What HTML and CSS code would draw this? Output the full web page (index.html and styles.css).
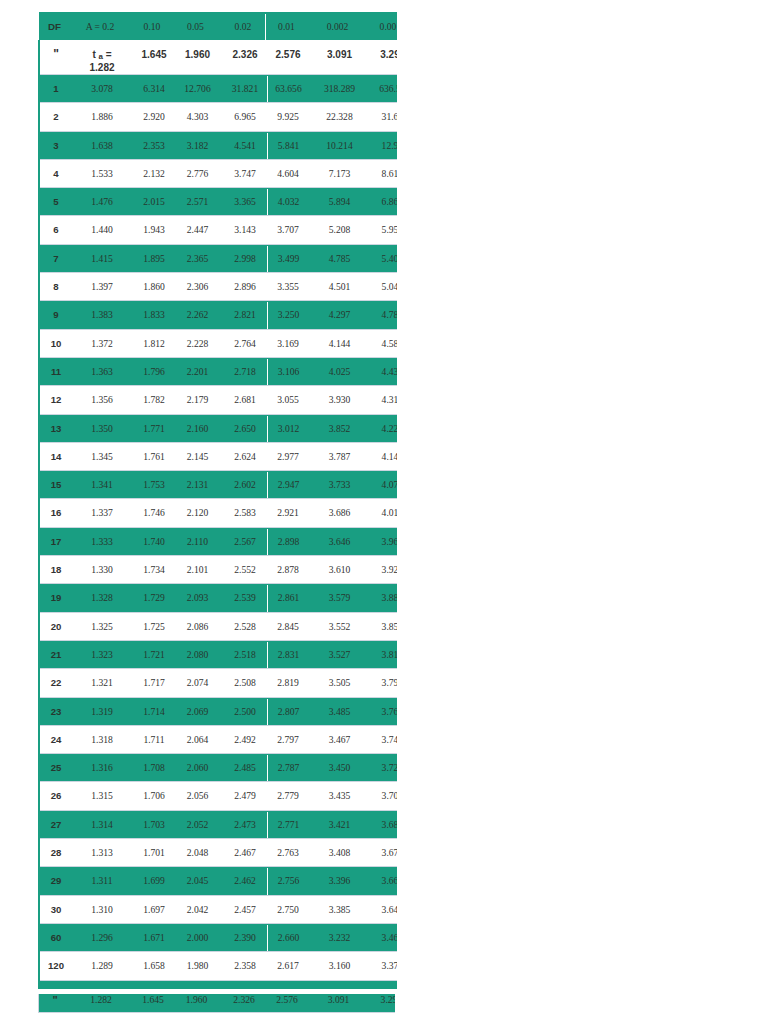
FILE: index.html
```html
<!DOCTYPE html>
<html lang="en">
<head>
<meta charset="utf-8">
<title>t-distribution table</title>
<link rel="stylesheet" href="styles.css">
</head>
<body>
<div class="page">
  <div class="sheet">
    <div class="head">
      <div class="c c1 b">DF</div>
      <div class="c c2">A = 0.2</div>
      <div class="c c3">0.10</div>
      <div class="c c4">0.05</div>
      <div class="c c5">0.02</div>
      <div class="c c6">0.01</div>
      <div class="c c7">0.002</div>
      <div class="c c8">0.00</div>
    </div>
    <div class="body">
      <div class="row inf">
        <div class="c c1 b">"</div>
        <div class="c c2 b">t <span class="sub">a</span> =<br>1.282</div>
        <div class="c c3 b">1.645</div>
        <div class="c c4 b">1.960</div>
        <div class="c c5 b">2.326</div>
        <div class="c c6 b">2.576</div>
        <div class="c c7 b">3.091</div>
        <div class="c c8 b">3.29</div>
      </div>
      <div class="row g"><div class="c c1 b">1</div><div class="c c2">3.078</div><div class="c c3">6.314</div><div class="c c4">12.706</div><div class="c c5">31.821</div><div class="c c6">63.656</div><div class="c c7">318.289</div><div class="c c8">636.5</div></div>
      <div class="row"><div class="c c1 b">2</div><div class="c c2">1.886</div><div class="c c3">2.920</div><div class="c c4">4.303</div><div class="c c5">6.965</div><div class="c c6">9.925</div><div class="c c7">22.328</div><div class="c c8">31.6</div></div>
      <div class="row g"><div class="c c1 b">3</div><div class="c c2">1.638</div><div class="c c3">2.353</div><div class="c c4">3.182</div><div class="c c5">4.541</div><div class="c c6">5.841</div><div class="c c7">10.214</div><div class="c c8">12.9</div></div>
      <div class="row"><div class="c c1 b">4</div><div class="c c2">1.533</div><div class="c c3">2.132</div><div class="c c4">2.776</div><div class="c c5">3.747</div><div class="c c6">4.604</div><div class="c c7">7.173</div><div class="c c8">8.61</div></div>
      <div class="row g"><div class="c c1 b">5</div><div class="c c2">1.476</div><div class="c c3">2.015</div><div class="c c4">2.571</div><div class="c c5">3.365</div><div class="c c6">4.032</div><div class="c c7">5.894</div><div class="c c8">6.86</div></div>
      <div class="row"><div class="c c1 b">6</div><div class="c c2">1.440</div><div class="c c3">1.943</div><div class="c c4">2.447</div><div class="c c5">3.143</div><div class="c c6">3.707</div><div class="c c7">5.208</div><div class="c c8">5.95</div></div>
      <div class="row g"><div class="c c1 b">7</div><div class="c c2">1.415</div><div class="c c3">1.895</div><div class="c c4">2.365</div><div class="c c5">2.998</div><div class="c c6">3.499</div><div class="c c7">4.785</div><div class="c c8">5.40</div></div>
      <div class="row"><div class="c c1 b">8</div><div class="c c2">1.397</div><div class="c c3">1.860</div><div class="c c4">2.306</div><div class="c c5">2.896</div><div class="c c6">3.355</div><div class="c c7">4.501</div><div class="c c8">5.04</div></div>
      <div class="row g"><div class="c c1 b">9</div><div class="c c2">1.383</div><div class="c c3">1.833</div><div class="c c4">2.262</div><div class="c c5">2.821</div><div class="c c6">3.250</div><div class="c c7">4.297</div><div class="c c8">4.78</div></div>
      <div class="row"><div class="c c1 b">10</div><div class="c c2">1.372</div><div class="c c3">1.812</div><div class="c c4">2.228</div><div class="c c5">2.764</div><div class="c c6">3.169</div><div class="c c7">4.144</div><div class="c c8">4.58</div></div>
      <div class="row g"><div class="c c1 b">11</div><div class="c c2">1.363</div><div class="c c3">1.796</div><div class="c c4">2.201</div><div class="c c5">2.718</div><div class="c c6">3.106</div><div class="c c7">4.025</div><div class="c c8">4.43</div></div>
      <div class="row"><div class="c c1 b">12</div><div class="c c2">1.356</div><div class="c c3">1.782</div><div class="c c4">2.179</div><div class="c c5">2.681</div><div class="c c6">3.055</div><div class="c c7">3.930</div><div class="c c8">4.31</div></div>
      <div class="row g"><div class="c c1 b">13</div><div class="c c2">1.350</div><div class="c c3">1.771</div><div class="c c4">2.160</div><div class="c c5">2.650</div><div class="c c6">3.012</div><div class="c c7">3.852</div><div class="c c8">4.22</div></div>
      <div class="row"><div class="c c1 b">14</div><div class="c c2">1.345</div><div class="c c3">1.761</div><div class="c c4">2.145</div><div class="c c5">2.624</div><div class="c c6">2.977</div><div class="c c7">3.787</div><div class="c c8">4.14</div></div>
      <div class="row g"><div class="c c1 b">15</div><div class="c c2">1.341</div><div class="c c3">1.753</div><div class="c c4">2.131</div><div class="c c5">2.602</div><div class="c c6">2.947</div><div class="c c7">3.733</div><div class="c c8">4.07</div></div>
      <div class="row"><div class="c c1 b">16</div><div class="c c2">1.337</div><div class="c c3">1.746</div><div class="c c4">2.120</div><div class="c c5">2.583</div><div class="c c6">2.921</div><div class="c c7">3.686</div><div class="c c8">4.01</div></div>
      <div class="row g"><div class="c c1 b">17</div><div class="c c2">1.333</div><div class="c c3">1.740</div><div class="c c4">2.110</div><div class="c c5">2.567</div><div class="c c6">2.898</div><div class="c c7">3.646</div><div class="c c8">3.96</div></div>
      <div class="row"><div class="c c1 b">18</div><div class="c c2">1.330</div><div class="c c3">1.734</div><div class="c c4">2.101</div><div class="c c5">2.552</div><div class="c c6">2.878</div><div class="c c7">3.610</div><div class="c c8">3.92</div></div>
      <div class="row g"><div class="c c1 b">19</div><div class="c c2">1.328</div><div class="c c3">1.729</div><div class="c c4">2.093</div><div class="c c5">2.539</div><div class="c c6">2.861</div><div class="c c7">3.579</div><div class="c c8">3.88</div></div>
      <div class="row"><div class="c c1 b">20</div><div class="c c2">1.325</div><div class="c c3">1.725</div><div class="c c4">2.086</div><div class="c c5">2.528</div><div class="c c6">2.845</div><div class="c c7">3.552</div><div class="c c8">3.85</div></div>
      <div class="row g"><div class="c c1 b">21</div><div class="c c2">1.323</div><div class="c c3">1.721</div><div class="c c4">2.080</div><div class="c c5">2.518</div><div class="c c6">2.831</div><div class="c c7">3.527</div><div class="c c8">3.81</div></div>
      <div class="row"><div class="c c1 b">22</div><div class="c c2">1.321</div><div class="c c3">1.717</div><div class="c c4">2.074</div><div class="c c5">2.508</div><div class="c c6">2.819</div><div class="c c7">3.505</div><div class="c c8">3.79</div></div>
      <div class="row g"><div class="c c1 b">23</div><div class="c c2">1.319</div><div class="c c3">1.714</div><div class="c c4">2.069</div><div class="c c5">2.500</div><div class="c c6">2.807</div><div class="c c7">3.485</div><div class="c c8">3.76</div></div>
      <div class="row"><div class="c c1 b">24</div><div class="c c2">1.318</div><div class="c c3">1.711</div><div class="c c4">2.064</div><div class="c c5">2.492</div><div class="c c6">2.797</div><div class="c c7">3.467</div><div class="c c8">3.74</div></div>
      <div class="row g"><div class="c c1 b">25</div><div class="c c2">1.316</div><div class="c c3">1.708</div><div class="c c4">2.060</div><div class="c c5">2.485</div><div class="c c6">2.787</div><div class="c c7">3.450</div><div class="c c8">3.72</div></div>
      <div class="row"><div class="c c1 b">26</div><div class="c c2">1.315</div><div class="c c3">1.706</div><div class="c c4">2.056</div><div class="c c5">2.479</div><div class="c c6">2.779</div><div class="c c7">3.435</div><div class="c c8">3.70</div></div>
      <div class="row g"><div class="c c1 b">27</div><div class="c c2">1.314</div><div class="c c3">1.703</div><div class="c c4">2.052</div><div class="c c5">2.473</div><div class="c c6">2.771</div><div class="c c7">3.421</div><div class="c c8">3.68</div></div>
      <div class="row"><div class="c c1 b">28</div><div class="c c2">1.313</div><div class="c c3">1.701</div><div class="c c4">2.048</div><div class="c c5">2.467</div><div class="c c6">2.763</div><div class="c c7">3.408</div><div class="c c8">3.67</div></div>
      <div class="row g"><div class="c c1 b">29</div><div class="c c2">1.311</div><div class="c c3">1.699</div><div class="c c4">2.045</div><div class="c c5">2.462</div><div class="c c6">2.756</div><div class="c c7">3.396</div><div class="c c8">3.66</div></div>
      <div class="row"><div class="c c1 b">30</div><div class="c c2">1.310</div><div class="c c3">1.697</div><div class="c c4">2.042</div><div class="c c5">2.457</div><div class="c c6">2.750</div><div class="c c7">3.385</div><div class="c c8">3.64</div></div>
      <div class="row g"><div class="c c1 b">60</div><div class="c c2">1.296</div><div class="c c3">1.671</div><div class="c c4">2.000</div><div class="c c5">2.390</div><div class="c c6">2.660</div><div class="c c7">3.232</div><div class="c c8">3.46</div></div>
      <div class="row"><div class="c c1 b">120</div><div class="c c2">1.289</div><div class="c c3">1.658</div><div class="c c4">1.980</div><div class="c c5">2.358</div><div class="c c6">2.617</div><div class="c c7">3.160</div><div class="c c8">3.37</div></div>
      <div class="bar"></div>
    </div>
    <div class="last">
      <div class="c c1 b">"</div>
      <div class="c c2">1.282</div>
      <div class="c c3">1.645</div>
      <div class="c c4">1.960</div>
      <div class="c c5">2.326</div>
      <div class="c c6">2.576</div>
      <div class="c c7">3.091</div>
      <div class="c c8">3.29</div>
    </div>
  </div>
</div>
</body>
</html>
```

FILE: styles.css
```css
html, body {
  margin: 0;
  padding: 0;
  background: #ffffff;
}

.page {
  padding: 12px 0 0 38px;
}

.sheet {
  width: 359px;
  overflow: hidden;
  font-family: "Liberation Serif", "Times New Roman", serif;
  font-size: 9.6px;
  color: #333333;
}

.c {
  flex-shrink: 0;
  box-sizing: border-box;
  text-align: center;
  white-space: nowrap;
}

.b {
  font-family: "Liberation Sans", Arial, sans-serif;
  font-weight: bold;
}

.c1 { width: 32px; }
.c2 { width: 60px; }
.c3 { width: 44px; }
.c4 { width: 43px; }
.c5 { width: 48px; padding-left: 4px; }
.c6 { width: 42px; }
.c7 { width: 61px; }
.c8 { width: 40px; }

/* header */
.head {
  display: flex;
  margin-left: 1px;
  height: 28px;
  background: #199e82;
  color: #26382f;
  line-height: 26px;
  padding-top: 2px;
  box-sizing: border-box;
  overflow: hidden;
}

.head .c1 { width: 31px; font-size: 9.8px; }
.head .c6 { border-left: 1px solid #ffffff; }

/* body block with green left rule */
.body {
  border-left: 2px solid #199e82;
}

.row {
  display: flex;
  height: 28.3px;
  box-sizing: border-box;
  border-bottom: 1px solid #cbd5df;
  line-height: 26.3px;
  padding-top: 1px;
  overflow: hidden;
  background: #ffffff;
}

.row.g {
  background: #199e82;
  color: #26382f;
}

.row.g .c6 {
  border-left: 1px solid #ffffff;
}

.row.inf {
  height: 35px;
  line-height: 12px;
  padding-top: 9px;
  align-items: flex-start;
}

.row.inf .c {
  font-size: 10px;
}

.row.inf .c1 {
  font-size: 12px;
  line-height: 10px;
}

.sub {
  font-size: 8px;
  position: relative;
  top: 1px;
}

.bar {
  height: 8px;
  background: #199e82;
}

.last {
  display: flex;
  height: 19px;
  box-sizing: border-box;
  margin-top: 5px;
  border-left: 1px solid #cbd5df;
  border-bottom: 1px solid #cbd5df;
  width: 357px;
  background: #199e82;
  color: #26382f;
  line-height: 11px;
  overflow: hidden;
}

.last .c1 {
  font-size: 11px;
  line-height: 12px;
}
```
